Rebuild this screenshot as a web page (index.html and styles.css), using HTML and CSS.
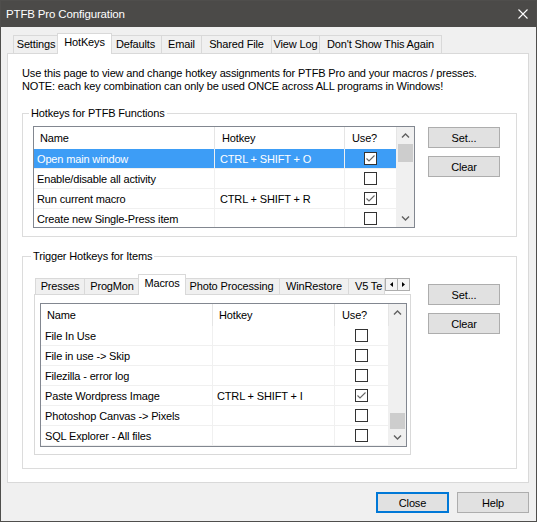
FILE: index.html
```html
<!DOCTYPE html>
<html lang="en">
<head>
    <meta charset="UTF-8">
    <title>PTFB Pro Configuration</title>
    <link rel="stylesheet" href="styles.css">
</head>
<body>
    <svg class="defs" width="0" height="0">
        <symbol id="chk-off" viewBox="0 0 13 13">
            <rect x="0.5" y="0.5" width="12" height="12" fill="#fff" stroke="#333"/>
        </symbol>
        <symbol id="chk-on" viewBox="0 0 13 13">
            <rect x="0.5" y="0.5" width="12" height="12" fill="#fff" stroke="#333"/>
            <polyline points="2.5,6.5 5,9 10.5,3.5" fill="none" stroke="#666" stroke-width="1.1"/>
        </symbol>
        <symbol id="chev-up" viewBox="0 0 9 5">
            <polyline points="1,4.5 4.5,1 8,4.5" fill="none" stroke="#606060" stroke-width="1.4"/>
        </symbol>
        <symbol id="chev-down" viewBox="0 0 9 5">
            <polyline points="1,0.5 4.5,4 8,0.5" fill="none" stroke="#606060" stroke-width="1.4"/>
        </symbol>
    </svg>

    <div class="window">
        <div class="titlebar">
            <span class="title">PTFB Pro Configuration</span>
            <svg class="close-x" width="10" height="10" viewBox="0 0 10 10">
                <path d="M0.5 0.5 L9.5 9.5 M9.5 0.5 L0.5 9.5" stroke="#fff" stroke-width="1.1"/>
            </svg>
        </div>

        <div class="client">
            <div class="tabs">
                <div class="tab">Settings</div>
                <div class="tab active">HotKeys</div>
                <div class="tab">Defaults</div>
                <div class="tab">Email</div>
                <div class="tab">Shared File</div>
                <div class="tab">View Log</div>
                <div class="tab">Don't Show This Again</div>
            </div>

            <div class="page">
                <p class="intro">
                    Use this page to view and change hotkey assignments for PTFB Pro and your macros / presses.<br>
                    NOTE: each key combination can only be used ONCE across ALL programs in Windows!
                </p>

                <div class="group group-functions">
                    <div class="group-title">Hotkeys for PTFB Functions</div>
                    <div class="group-body">
                        <div class="list list-functions">
                            <div class="list-body">
                                <table class="grid">
                                    <colgroup>
                                        <col style="width:181px"><col style="width:130px"><col style="width:52px">
                                    </colgroup>
                                    <thead>
                                        <tr><th>Name</th><th>Hotkey</th><th>Use?</th></tr>
                                    </thead>
                                    <tbody>
                                        <tr class="selected">
                                            <td>Open main window</td><td class="key">CTRL + SHIFT + O</td>
                                            <td class="use"><svg class="cb"><use href="#chk-on"/></svg></td>
                                        </tr>
                                        <tr>
                                            <td>Enable/disable all activity</td><td class="key"></td>
                                            <td class="use"><svg class="cb"><use href="#chk-off"/></svg></td>
                                        </tr>
                                        <tr>
                                            <td>Run current macro</td><td class="key">CTRL + SHIFT + R</td>
                                            <td class="use"><svg class="cb"><use href="#chk-on"/></svg></td>
                                        </tr>
                                        <tr>
                                            <td>Create new Single-Press item</td><td class="key"></td>
                                            <td class="use"><svg class="cb"><use href="#chk-off"/></svg></td>
                                        </tr>
                                    </tbody>
                                </table>
                            </div>
                            <div class="vscroll">
                                <div class="sb-btn"><svg class="chev"><use href="#chev-up"/></svg></div>
                                <div class="sb-track"><div class="sb-thumb" style="margin-top:0;height:18px"></div></div>
                                <div class="sb-btn"><svg class="chev"><use href="#chev-down"/></svg></div>
                            </div>
                        </div>
                        <div class="side-buttons">
                            <button class="btn">Set...</button>
                            <button class="btn">Clear</button>
                        </div>
                    </div>
                </div>

                <div class="group group-items">
                    <div class="group-title">Trigger Hotkeys for Items</div>
                    <div class="group-body">
                        <div class="subtabs-wrap">
                            <div class="subtabs-bar">
                                <div class="subtabs">
                                    <div class="subtab">Presses</div>
                                    <div class="subtab">ProgMon</div>
                                    <div class="subtab active">Macros</div>
                                    <div class="subtab">Photo Processing</div>
                                    <div class="subtab">WinRestore</div>
                                    <div class="subtab">V5 Te</div>
                                </div>
                                <div class="tab-arrows">
                                    <div class="arrow-btn">
                                        <svg width="3" height="5" viewBox="0 0 3 5"><polygon points="3,0 3,5 0,2.5" fill="#000"/></svg>
                                    </div>
                                    <div class="arrow-btn">
                                        <svg width="3" height="5" viewBox="0 0 3 5"><polygon points="0,0 0,5 3,2.5" fill="#000"/></svg>
                                    </div>
                                </div>
                            </div>
                            <div class="subpage">
                                <div class="list list-items">
                                    <div class="list-body">
                                        <table class="grid">
                                            <colgroup>
                                                <col style="width:172px"><col style="width:122px"><col style="width:54px">
                                            </colgroup>
                                            <thead>
                                                <tr><th>Name</th><th class="th-key">Hotkey</th><th>Use?</th></tr>
                                            </thead>
                                            <tbody>
                                                <tr>
                                                    <td>File In Use</td><td class="key"></td>
                                                    <td class="use"><svg class="cb"><use href="#chk-off"/></svg></td>
                                                </tr>
                                                <tr>
                                                    <td>File in use -&gt; Skip</td><td class="key"></td>
                                                    <td class="use"><svg class="cb"><use href="#chk-off"/></svg></td>
                                                </tr>
                                                <tr>
                                                    <td>Filezilla - error log</td><td class="key"></td>
                                                    <td class="use"><svg class="cb"><use href="#chk-off"/></svg></td>
                                                </tr>
                                                <tr>
                                                    <td>Paste Wordpress Image</td><td class="key">CTRL + SHIFT + I</td>
                                                    <td class="use"><svg class="cb"><use href="#chk-on"/></svg></td>
                                                </tr>
                                                <tr>
                                                    <td>Photoshop Canvas -&gt; Pixels</td><td class="key"></td>
                                                    <td class="use"><svg class="cb"><use href="#chk-off"/></svg></td>
                                                </tr>
                                                <tr>
                                                    <td>SQL Explorer - All files</td><td class="key"></td>
                                                    <td class="use"><svg class="cb"><use href="#chk-off"/></svg></td>
                                                </tr>
                                            </tbody>
                                        </table>
                                    </div>
                                    <div class="vscroll">
                                        <div class="sb-btn"><svg class="chev"><use href="#chev-up"/></svg></div>
                                        <div class="sb-track"><div class="sb-thumb" style="margin-top:92px;height:16px"></div></div>
                                        <div class="sb-btn"><svg class="chev"><use href="#chev-down"/></svg></div>
                                    </div>
                                </div>
                            </div>
                        </div>
                        <div class="side-buttons side-buttons-low">
                            <button class="btn">Set...</button>
                            <button class="btn">Clear</button>
                        </div>
                    </div>
                </div>
            </div>

            <div class="footer">
                <button class="btn btn-default">Close</button>
                <button class="btn">Help</button>
            </div>
        </div>
    </div>
</body>
</html>
```

FILE: styles.css
```css
* {
    box-sizing: border-box;
}

body {
    margin: 0;
    font-family: "Liberation Sans", Arial, sans-serif;
    font-size: 11px;
    letter-spacing: -0.15px;
    color: #000;
    background: #f0f0f0;
}

.defs {
    position: absolute;
    width: 0;
    height: 0;
}

.window {
    width: 537px;
    height: 522px;
    border: 1px solid #4f4e4c;
    background: #f0f0f0;
}

/* title bar */
.titlebar {
    height: 26px;
    background: #4b4a48;
    color: #fff;
    display: flex;
    align-items: center;
    justify-content: space-between;
    padding: 0 8px 0 5px;
}

.title {
    font-size: 11.5px;
}

.client {
    padding: 6px 7px 0 6px;
}

/* main tabs */
.tabs {
    display: flex;
    align-items: flex-end;
    height: 21px;
    padding-left: 6px;
    margin-bottom: -1px;
    position: relative;
    z-index: 1;
}

.tab {
    height: 18px;
    margin-bottom: 1px;
    border-top: 1px solid #d9d9d9;
    border-right: 1px solid #d9d9d9;
    background: #f0f0f0;
    text-align: center;
    line-height: 17px;
    white-space: nowrap;
}

.tab:first-child {
    border-left: 1px solid #d9d9d9;
}

.tab.active {
    height: 21px;
    margin: 0 -2px;
    border-left: 1px solid #d9d9d9;
    background: #fff;
    line-height: 17px;
    position: relative;
}

.tabs .tab:nth-child(1) { width: 46px; }
.tabs .tab:nth-child(2) { width: 55px; }
.tabs .tab:nth-child(3) { width: 52px; }
.tabs .tab:nth-child(4) { width: 40px; }
.tabs .tab:nth-child(5) { width: 70px; }
.tabs .tab:nth-child(6) { width: 48px; }
.tabs .tab:nth-child(7) { width: 122px; }

.page {
    height: 430px;
    background: #fff;
    border: 1px solid #d9d9d9;
    padding: 0 11px 0 14px;
}

.intro {
    margin: 13px 0 0;
    line-height: 13px;
}

/* group boxes */
.group {
    border: 1px solid #dcdcdc;
}

.group-functions {
    margin-top: 20px;
    padding: 0 15px 8px 10px;
}

.group-items {
    margin-top: 19px;
    padding: 0 15px 13px 11px;
}

.group-title {
    width: fit-content;
    margin: -7px 0 0 -4px;
    padding: 0 2px;
    line-height: 13px;
    background: #fff;
}

.group-items .group-title {
    margin-left: -3px;
}

.group-body {
    display: flex;
    align-items: flex-start;
}

.group-functions .group-body {
    margin-top: 6px;
    gap: 13px;
}

.group-items .group-body {
    margin-top: 11px;
    gap: 17px;
}

.side-buttons {
    display: flex;
    flex-direction: column;
    gap: 8px;
    margin-top: 1px;
}

.side-buttons-low {
    margin-top: 10px;
}

.btn {
    width: 72px;
    height: 21px;
    padding: 0;
    border: 1px solid #adadad;
    background: #e1e1e1;
    font-family: inherit;
    font-size: 11px;
    letter-spacing: inherit;
    color: #000;
}

.btn-default {
    width: 73px;
    border: 2px solid #0078d7;
}

/* list views */
.list {
    display: flex;
    border: 1px solid #828790;
    background: #fff;
    overflow: hidden;
}

.list-functions {
    width: 382px;
    height: 102px;
}

.list-items {
    width: 367px;
    height: 144px;
}

.list-body {
    flex: 1;
    overflow: hidden;
}

.grid {
    width: 100%;
    table-layout: fixed;
    border-collapse: separate;
    border-spacing: 0;
}

.grid th {
    height: 22px;
    padding: 0 0 0 6px;
    font-weight: normal;
    text-align: left;
    border-right: 1px solid #e5e5e5;
    white-space: nowrap;
}

.grid th:last-child {
    padding-left: 7px;
}

.list-functions th:nth-child(2) {
    padding-left: 7px;
}

.grid td {
    height: 20px;
    padding: 0 0 0 4px;
    border-right: 1px solid #f0f0f0;
    border-bottom: 1px solid #f0f0f0;
    white-space: nowrap;
    overflow: hidden;
}

.list-functions td:first-child {
    padding-left: 3px;
}

.list-functions td.key {
    padding-left: 5px;
}

.grid td.use {
    padding: 0;
}

.grid tr.selected td {
    background: #3d9df6;
    color: #fff;
}

.cb {
    display: block;
    width: 13px;
    height: 13px;
    margin: 0 auto;
}

/* scroll bars */
.vscroll {
    width: 17px;
    flex: none;
    display: flex;
    flex-direction: column;
    background: #f0f0f0;
}

.sb-btn {
    height: 17px;
    display: flex;
    align-items: center;
    justify-content: center;
}

.chev {
    width: 9px;
    height: 5px;
}

.sb-track {
    flex: 1;
}

.sb-thumb {
    margin: 0 1px;
    background: #cdcdcd;
}

/* inner tabs */
.subtabs-wrap {
    width: 377px;
}

.subtabs-bar {
    display: flex;
    height: 21px;
    margin-bottom: -1px;
    position: relative;
    z-index: 1;
}

.subtabs {
    flex: 1;
    display: flex;
    align-items: flex-end;
    overflow: hidden;
    padding-left: 1px;
}

.subtab {
    flex: none;
    height: 16px;
    margin-bottom: 1px;
    border-top: 1px solid #d9d9d9;
    border-right: 1px solid #d9d9d9;
    background: #f0f0f0;
    text-align: center;
    line-height: 15px;
    white-space: nowrap;
}

.subtab:first-child {
    border-left: 1px solid #d9d9d9;
}

.subtab.active {
    height: 21px;
    margin: 0 -2px;
    border-left: 1px solid #d9d9d9;
    background: #fff;
    line-height: 17px;
    position: relative;
}

.subtabs .subtab:nth-child(1) { width: 50px; }
.subtabs .subtab:nth-child(2) { width: 55px; }
.subtabs .subtab:nth-child(3) { width: 48px; }
.subtabs .subtab:nth-child(4) { width: 96px; }
.subtabs .subtab:nth-child(5) { width: 69px; }
.subtabs .subtab:nth-child(6) { width: 36px; text-align: left; padding-left: 6px; }

.tab-arrows {
    display: flex;
    margin: 4px 1px 0 0;
}

.arrow-btn {
    width: 13px;
    height: 13px;
    margin-left: -1px;
    border: 1px solid #adadad;
    background: #f4f4f4;
    display: flex;
    align-items: center;
    justify-content: center;
}

.arrow-btn:first-child {
    margin-left: 0;
}

.subpage {
    height: 161px;
    border: 1px solid #d9d9d9;
    background: #fff;
    padding: 8px 3px 0 5px;
}

/* footer */
.footer {
    display: flex;
    justify-content: flex-end;
    gap: 8px;
    margin: 9px 0 0 0;
}
```
